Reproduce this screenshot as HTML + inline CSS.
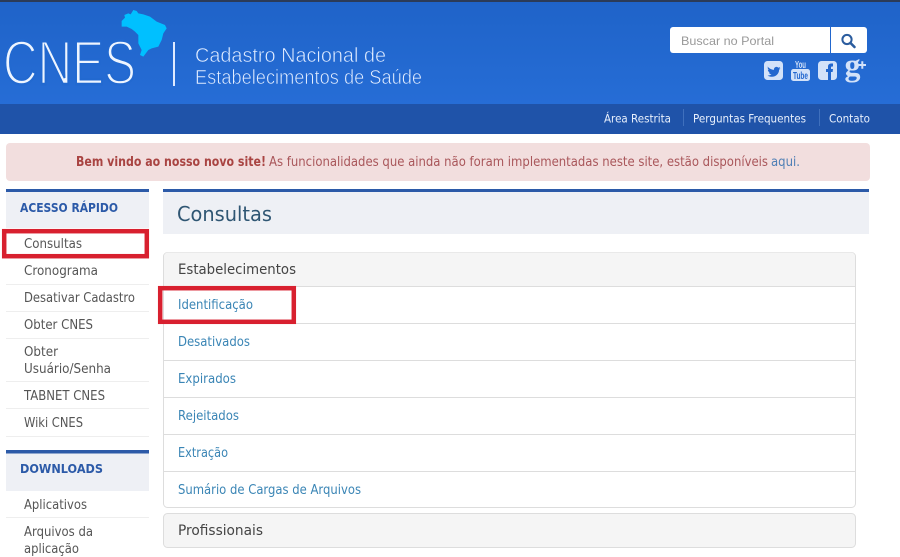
<!DOCTYPE html>
<html><head><meta charset="utf-8"><title>CNES</title>
<style>
html,body{margin:0;padding:0;background:#fff;width:900px;height:557px;overflow:hidden}
svg{display:block;filter:blur(.3px)}
text{font-family:"DejaVu Sans",sans-serif;font-size:13px}
.s{fill:#555}
.l{fill:#3a85b5}
.n{fill:#e8f0fd;font-size:11.5px}
.h{fill:#2c5aa8;font-weight:bold;font-size:12.5px}
</style></head><body>
<svg width="900" height="557" viewBox="0 0 900 557" xmlns="http://www.w3.org/2000/svg">
<defs>
<linearGradient id="hd" x1="0" x2="0" y1="0" y2="1"><stop offset="0" stop-color="#1f63c8"/><stop offset="1" stop-color="#266dd6"/></linearGradient>
</defs>
<rect width="900" height="557" fill="#fff"/>
<rect width="900" height="104" fill="url(#hd)"/>
<rect width="900" height="2" fill="#2b3b58"/>
<rect y="104" width="900" height="30" fill="#1f53a9"/>

<path transform="translate(110,5) scale(.3333)" fill="#00c0ff" d="M35 48L45 38L43 30L55 25L62 28L70 15L80 18L85 25L100 28L120 35L140 50L165 60L170 70L160 85L155 105L145 125L125 130L115 135L100 155L90 150L95 135L85 115L85 90L75 80L65 72L50 65L35 65Z"/>
<text x="3" y="84" textLength="133" lengthAdjust="spacingAndGlyphs" style="font-family:'Liberation Sans',sans-serif;font-size:62px;fill:#eef5ff;stroke:#2269d0;stroke-width:2.4px">CNES</text>
<rect x="173" y="42" width="2" height="44" fill="#dfeaff"/>
<text x="195" y="62" textLength="191" lengthAdjust="spacingAndGlyphs" style="font-family:'Liberation Sans',sans-serif;font-size:20px;fill:#e4eeff;stroke:#256bd3;stroke-width:.6px">Cadastro Nacional de</text>
<text x="195" y="84" textLength="227" lengthAdjust="spacingAndGlyphs" style="font-family:'Liberation Sans',sans-serif;font-size:20px;fill:#e4eeff;stroke:#256bd3;stroke-width:.6px">Estabelecimentos de Saúde</text>

<path d="M673 27H830V53H673a3 3 0 0 1-3-3V30a3 3 0 0 1 3-3Z" fill="#fff"/>
<path d="M831 27H864a3 3 0 0 1 3 3V50a3 3 0 0 1-3 3H831Z" fill="#fff"/>
<text x="681" y="45" textLength="93" lengthAdjust="spacingAndGlyphs" style="font-family:'Liberation Sans',sans-serif;font-size:12px;fill:#999">Buscar no Portal</text>
<circle cx="847" cy="39.500" r="4.600" fill="none" stroke="#2b5c9e" stroke-width="2"/>
<path d="M850.500 43L854.500 47" stroke="#2b5c9e" stroke-width="2.600" stroke-linecap="round"/>

<rect x="764" y="61" width="19" height="19" rx="3.500" fill="#d3e2f9"/>
<path d="M767.500 66.500c2 2.200 4.200 3.300 6.500 3.400c-.4-2.500 2.500-4 4.300-2.200l1.900-.7l-1 1.700l1.200-.3c-.3.600-.8 1-1.300 1.400c0 4-3.300 7-7 7c-1.700 0-3.200-.4-4.500-1.300c1.500.1 2.800-.3 3.900-1.100c-1.300-.1-2.200-.8-2.600-1.900h1.200c-1.400-.4-2.200-1.500-2.300-2.800l1.200.3c-1.300-1-1.600-2.200-1-3.500Z" fill="#2267cf"/>

<text x="795" y="68" textLength="11" lengthAdjust="spacingAndGlyphs" style="font-family:'Liberation Sans',sans-serif;font-size:10px;font-weight:bold;fill:#d3e2f9">You</text>
<rect x="791" y="69" width="19" height="12" rx="2.500" fill="#d3e2f9"/>
<text x="793" y="79" textLength="15" lengthAdjust="spacingAndGlyphs" style="font-family:'Liberation Sans',sans-serif;font-size:10px;font-weight:bold;fill:#2267cf">Tube</text>

<rect x="818" y="61" width="19" height="19" rx="3.500" fill="#d3e2f9"/>
<path d="M828 80V72H826V69H828V66.500C828 64.500 829.500 63.500 831.500 63.500H833V66.500H832C831.200 66.500 831 66.900 831 67.500V69H833L832.600 72H831V80Z" fill="#2267cf"/>

<text x="844.500" y="75.500" style="font-family:'Liberation Serif',serif;font-size:32px;font-weight:bold;fill:#d3e2f9">g</text>
<path d="M858.500 65H866M862.300 61.300V68.700" stroke="#d3e2f9" stroke-width="2"/>

<text class="n" x="604" y="122.500" textLength="67" lengthAdjust="spacingAndGlyphs">Área Restrita</text>
<text class="n" x="693" y="122.500" textLength="113" lengthAdjust="spacingAndGlyphs">Perguntas Frequentes</text>
<text class="n" x="829" y="122.500" textLength="41" lengthAdjust="spacingAndGlyphs">Contato</text>
<rect x="683" y="109" width="1" height="17" fill="#3f70bd"/>
<rect x="819" y="109" width="1" height="17" fill="#3f70bd"/>

<rect x="6" y="143" width="864" height="38" rx="4" fill="#f2dede"/>
<text x="76" y="166" textLength="190" lengthAdjust="spacingAndGlyphs" style="font-weight:bold;fill:#a94442">Bem vindo ao nosso novo site!</text>
<text x="269" y="166" textLength="499" lengthAdjust="spacingAndGlyphs" style="fill:#a9565a">As funcionalidades que ainda não foram implementadas neste site, estão disponíveis</text>
<text x="771" y="166" textLength="29" lengthAdjust="spacingAndGlyphs" style="fill:#4f7fb5">aqui.</text>

<rect x="6" y="189" width="143" height="39" fill="#eef0f5"/>
<rect x="6" y="189" width="143" height="3" fill="#2c5aa8"/>
<text class="h" x="20" y="212" textLength="98" lengthAdjust="spacingAndGlyphs">ACESSO RÁPIDO</text>

<g fill="#eeeeee">
<rect x="6" y="284" width="143" height="1"/><rect x="6" y="311" width="143" height="1"/><rect x="6" y="338" width="143" height="1"/><rect x="6" y="381" width="143" height="1"/><rect x="6" y="408" width="143" height="1"/><rect x="6" y="436" width="143" height="1"/><rect x="6" y="517" width="143" height="1"/>
</g>
<text class="s" x="24" y="248" textLength="58" lengthAdjust="spacingAndGlyphs">Consultas</text>
<text class="s" x="24" y="275" textLength="74" lengthAdjust="spacingAndGlyphs">Cronograma</text>
<text class="s" x="24" y="302" textLength="111" lengthAdjust="spacingAndGlyphs">Desativar Cadastro</text>
<text class="s" x="24" y="329" textLength="69" lengthAdjust="spacingAndGlyphs">Obter CNES</text>
<text class="s" x="24" y="356" textLength="34" lengthAdjust="spacingAndGlyphs">Obter</text>
<text class="s" x="24" y="373" textLength="87" lengthAdjust="spacingAndGlyphs">Usuário/Senha</text>
<text class="s" x="24" y="400" textLength="81" lengthAdjust="spacingAndGlyphs">TABNET CNES</text>
<text class="s" x="24" y="427" textLength="59" lengthAdjust="spacingAndGlyphs">Wiki CNES</text>

<rect x="6" y="450" width="143" height="41" fill="#eef0f5"/>
<rect x="6" y="450" width="143" height="3.500" fill="#2c5aa8"/>
<text class="h" x="20" y="473" textLength="83" lengthAdjust="spacingAndGlyphs">DOWNLOADS</text>
<text class="s" x="24" y="509" textLength="63" lengthAdjust="spacingAndGlyphs">Aplicativos</text>
<text class="s" x="24" y="536" textLength="69" lengthAdjust="spacingAndGlyphs">Arquivos da</text>
<text class="s" x="24" y="553" textLength="55" lengthAdjust="spacingAndGlyphs">aplicação</text>

<rect x="163" y="189" width="706" height="45" fill="#eef0f5"/>
<rect x="163" y="189" width="706" height="3" fill="#2c5aa8"/>
<text x="177" y="221" textLength="95" lengthAdjust="spacingAndGlyphs" style="font-size:20px;fill:#2f5673">Consultas</text>

<rect x="163.500" y="252.500" width="692" height="255" rx="4" fill="#fff" stroke="#ddd"/>
<path d="M164 286V256.500a4 4 0 0 1 4-4H851a4 4 0 0 1 4 4V286Z" fill="#f5f5f5"/>
<g fill="#ddd"><rect x="164" y="286" width="691" height="1"/><rect x="164" y="323" width="691" height="1"/><rect x="164" y="360" width="691" height="1"/><rect x="164" y="397" width="691" height="1"/><rect x="164" y="434" width="691" height="1"/><rect x="164" y="471" width="691" height="1"/></g>
<text x="178" y="274" textLength="118" lengthAdjust="spacingAndGlyphs" style="font-size:14.5px;fill:#444">Estabelecimentos</text>
<text class="l" x="178" y="309" textLength="75" lengthAdjust="spacingAndGlyphs">Identificação</text>
<text class="l" x="178" y="346" textLength="72" lengthAdjust="spacingAndGlyphs">Desativados</text>
<text class="l" x="178" y="383" textLength="58" lengthAdjust="spacingAndGlyphs">Expirados</text>
<text class="l" x="178" y="420" textLength="61" lengthAdjust="spacingAndGlyphs">Rejeitados</text>
<text class="l" x="178" y="457" textLength="50" lengthAdjust="spacingAndGlyphs">Extração</text>
<text class="l" x="178" y="494" textLength="183" lengthAdjust="spacingAndGlyphs">Sumário de Cargas de Arquivos</text>

<rect x="163.500" y="513.500" width="692" height="34" rx="4" fill="#f5f5f5" stroke="#ddd"/>
<text x="178" y="535" textLength="85" lengthAdjust="spacingAndGlyphs" style="font-size:14.5px;fill:#444">Profissionais</text>

<rect x="4.200" y="231.200" width="142.600" height="25" fill="none" stroke="#d8202f" stroke-width="4.500"/>
<rect x="160.200" y="288.200" width="133.600" height="33.600" fill="none" stroke="#d8202f" stroke-width="4.500"/>
</svg>
</body></html>
